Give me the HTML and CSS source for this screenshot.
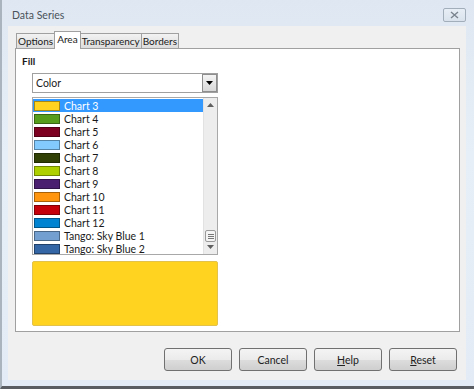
FILE: index.html
```html
<!DOCTYPE html>
<html lang="en">
<head>
    <meta charset="UTF-8">
    <title>Data Series</title>
    <link rel="stylesheet" href="styles.css">
</head>
<body>

    <div class="window">
        <!-- Title bar -->
        <div class="titlebar">
            <span class="title">Data Series</span>
            <span class="close">
                <svg width="9" height="8" viewBox="0 0 9 8"><path d="M1 1 L8 7 M8 1 L1 7" stroke="#7a848e" stroke-width="1.4"/></svg>
            </span>
        </div>

        <!-- Client area -->
        <div class="client">
            <div class="tabs">
                <div class="tab">Options</div>
                <div class="tab active">Area</div>
                <div class="tab">Transparency</div>
                <div class="tab">Borders</div>
            </div>

            <div class="panel">
                <div class="label">Fill</div>

                <div class="dropdown">
                    <span>Color</span>
                    <span class="drop-btn">
                        <svg width="7" height="4" viewBox="0 0 7 4"><path d="M0 0 H7 L3.5 4 Z" fill="#000"/></svg>
                    </span>
                </div>

                <div class="listbox">
                    <div class="items" id="items"></div>
                    <div class="scrollbar">
                        <svg class="arrow" width="7" height="4" viewBox="0 0 7 4"><path d="M0 4 H7 L3.5 0 Z" fill="#606060"/></svg>
                        <div class="track">
                            <div class="thumb"><i></i><i></i><i></i></div>
                        </div>
                        <svg class="arrow" width="7" height="4" viewBox="0 0 7 4"><path d="M0 0 H7 L3.5 4 Z" fill="#606060"/></svg>
                    </div>
                </div>

                <div class="preview"></div>
            </div>

            <div class="buttons">
                <button>OK</button>
                <button>Cancel</button>
                <button><u>H</u>elp</button>
                <button><u>R</u>eset</button>
            </div>
        </div>
    </div>

    <script>
        // Colour list
        const colors = [
            { name: "Chart 3", value: "#ffd320" },
            { name: "Chart 4", value: "#579d1c" },
            { name: "Chart 5", value: "#7e0021" },
            { name: "Chart 6", value: "#83caff" },
            { name: "Chart 7", value: "#314004" },
            { name: "Chart 8", value: "#aecf00" },
            { name: "Chart 9", value: "#4b1f6f" },
            { name: "Chart 10", value: "#ff950e" },
            { name: "Chart 11", value: "#c5000b" },
            { name: "Chart 12", value: "#0084d1" },
            { name: "Tango: Sky Blue 1", value: "#729fcf" },
            { name: "Tango: Sky Blue 2", value: "#3465a4" }
        ];

        const items = document.getElementById("items");
        colors.forEach((color, i) => {
            const row = document.createElement("div");
            row.className = i === 0 ? "item selected" : "item";
            row.innerHTML = `<span class="swatch" style="background: ${color.value}"></span><span class="name">${color.name}</span>`;
            items.appendChild(row);
        });
    </script>
</body>
</html>
```

FILE: styles.css
```css
/* Global */
* {
    margin: 0;
    padding: 0;
    box-sizing: border-box;
}

body {
    width: 474px;
    height: 389px;
    overflow: hidden;
    background: #ffffff;
    font-family: Lato, 'Open Sans', sans-serif;
    font-size: 10px;
    color: #1a1a1a;
}

/* Window frame */
.window {
    width: 474px;
    height: 389px;
    display: flex;
    flex-direction: column;
    padding: 0 8px 6px 6px;
    background: linear-gradient(180deg, #dfe8f2 0%, #e6eef7 40%, #e3ecf6 100%);
    border-left: 2px solid #a9b4bf;
    border-bottom: 3px solid #5a5e62;
}

.titlebar {
    height: 26px;
    display: flex;
    align-items: center;
    justify-content: space-between;
    padding: 0 0 0 4px;
}

.title {
    font-size: 10.5px;
    color: #4a525a;
    margin-top: 4px;
}

.close {
    width: 23px;
    height: 14px;
    margin-top: 4px;
    border: 1px solid #a3aebb;
    border-radius: 2px;
    background: linear-gradient(180deg, #e8eef5, #d9e2ec);
    display: flex;
    align-items: center;
    justify-content: center;
}

/* Client area */
.client {
    flex: 1;
    background: #f0f0f0;
    padding: 5px 6px 9px 7px;
    display: flex;
    flex-direction: column;
}

.tabs {
    display: flex;
    align-items: flex-end;
    height: 17px;
    padding-left: 1px;
    position: relative;
    z-index: 1;
}

.tab {
    height: 15px;
    padding: 0 1px;
    line-height: 14px;
    font-size: 10px;
    border: 1px solid #a0a0a0;
    border-bottom: none;
    background: linear-gradient(180deg, #f2f2f2, #dcdcdc);
    margin-right: -1px;
}

.tab.active {
    height: 18px;
    background: #ffffff;
    margin-bottom: -1px;
    line-height: 15px;
    padding: 0 2px;
}

.panel {
    height: 284px;
    background: #ffffff;
    border: 1px solid #a0a0a0;
    padding: 6px 0 0 6px;
}

.label {
    font-weight: bold;
    height: 18px;
}

.dropdown {
    width: 186px;
    height: 20px;
    margin-left: 10px;
    border: 1px solid #a0a0a0;
    display: flex;
    align-items: center;
    justify-content: space-between;
    padding-left: 3px;
    font-size: 10.5px;
}

.drop-btn {
    width: 15px;
    height: 18px;
    border: 1px solid #8e8e8e;
    background: linear-gradient(180deg, #f4f4f4, #d8d8d8);
    display: flex;
    align-items: center;
    justify-content: center;
}

/* Colour list */
.listbox {
    width: 186px;
    height: 158px;
    margin: 4px 0 0 10px;
    border: 1px solid #a8a8a8;
    display: flex;
}

.items {
    flex: 1;
    padding-top: 1px;
}

.item {
    height: 13px;
    display: flex;
    align-items: center;
    gap: 4px;
    padding-left: 1px;
    font-size: 10.5px;
}

.item .name {
    line-height: 12px;
}

.item.selected {
    background: #3399ff;
    color: #fff;
}

.swatch {
    width: 26px;
    height: 10px;
    border: 1px solid rgba(0, 0, 0, 0.35);
}

.scrollbar {
    width: 14px;
    background: #ededed;
    border-left: 1px solid #e2e2e2;
    display: flex;
    flex-direction: column;
    align-items: center;
    padding: 5px 0;
}

.track {
    flex: 1;
    width: 100%;
    display: flex;
    flex-direction: column;
    justify-content: flex-end;
    padding: 0 1px 3px;
}

.thumb {
    height: 12px;
    border: 1px solid #9a9a9a;
    border-radius: 2px;
    background: #f4f4f4;
    display: flex;
    flex-direction: column;
    justify-content: center;
    align-items: center;
    gap: 1px;
}

.thumb i {
    width: 6px;
    height: 1px;
    background: #777;
}

.preview {
    width: 186px;
    height: 65px;
    margin: 6px 0 0 10px;
    background: #ffd320;
    border: 1px solid #e2c24a;
    border-radius: 2px;
}

/* Buttons */
.buttons {
    display: flex;
    justify-content: flex-end;
    gap: 7px;
    margin-top: auto;
    padding-right: 3px;
}

.buttons button {
    width: 68px;
    height: 23px;
    font-family: Lato, sans-serif;
    font-size: 10.5px;
    color: #222;
    border: 1px solid #707070;
    border-radius: 3px;
    background: linear-gradient(180deg, #f4f4f4 0%, #ebebeb 50%, #dddddd 51%, #cfcfcf 100%);
}
```
